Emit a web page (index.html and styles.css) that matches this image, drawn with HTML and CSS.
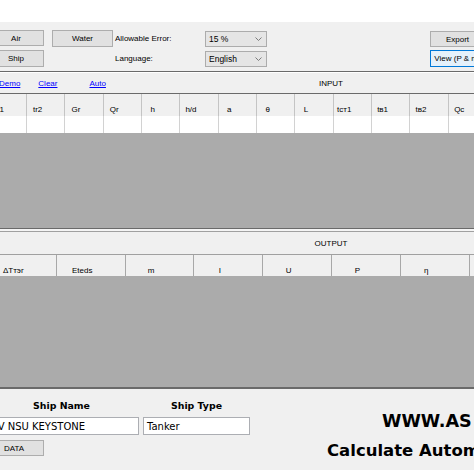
FILE: index.html
```html
<!DOCTYPE html>
<html>
<head>
<meta charset="utf-8">
<link rel="stylesheet" href="styles.css">
</head>
<body>
<div class="top"></div>
<div class="app">
  <div class="toolbar">
    <button class="btn b-air">Air</button>
    <button class="btn b-water">Water</button>
    <span class="lbl l-err">Allowable Error:</span>
    <div class="combo c-err"><span>15 %</span><svg class="chev" width="7" height="4" viewBox="0 0 7 4"><path d="M0.5 0.5 L3.5 3.5 L6.5 0.5" fill="none" stroke="#707070" stroke-width="0.9"/></svg></div>
    <button class="btn b-export">Export</button>
    <button class="btn b-ship">Ship</button>
    <span class="lbl l-lang">Language:</span>
    <div class="combo c-lang"><span>English</span><svg class="chev" width="7" height="4" viewBox="0 0 7 4"><path d="M0.5 0.5 L3.5 3.5 L6.5 0.5" fill="none" stroke="#707070" stroke-width="0.9"/></svg></div>
    <button class="btn b-view">View (P &amp; m)</button>
  </div>

  <div class="rule-dark"></div>
  <div class="rule-white"></div>
  <div class="strip strip-in">
    <div class="links">
      <a class="lnk l-demo">Demo</a>
      <a class="lnk l-clear">Clear</a>
      <a class="lnk l-auto">Auto</a>
    </div>
    <div class="title">INPUT</div>
  </div>
  <div class="rule-dark"></div>

  <div class="grid-in">
    <div class="hc">tr1</div><div class="hc">tr2</div><div class="hc">Gr</div><div class="hc">Qr</div><div class="hc">h</div><div class="hc">h/d</div><div class="hc">a</div><div class="hc">θ</div><div class="hc">L</div><div class="hc">tст1</div><div class="hc">tв1</div><div class="hc">tв2</div><div class="hc">Qc</div>
    <div class="dc"></div><div class="dc"></div><div class="dc"></div><div class="dc"></div><div class="dc"></div><div class="dc"></div><div class="dc"></div><div class="dc"></div><div class="dc"></div><div class="dc"></div><div class="dc"></div><div class="dc"></div><div class="dc"></div>
  </div>
  <div class="ws ws-in"></div>

  <div class="rule-dark"></div>
  <div class="rule-light"></div>
  <div class="rule-mid"></div>
  <div class="strip strip-out">
    <div class="links"></div>
    <div class="title">OUTPUT</div>
  </div>
  <div class="rule-mid"></div>

  <div class="grid-out">
    <div class="oc">ΔTтэг</div><div class="oc">Eteds</div><div class="oc">m</div><div class="oc">I</div><div class="oc">U</div><div class="oc">P</div><div class="oc">η</div><div class="oc"></div>
  </div>
  <div class="ws ws-out"></div>
  <div class="rule-dark2"></div>

  <div class="bottom">
    <div class="form">
      <div class="flbl f-name">Ship Name</div>
      <div class="flbl f-type">Ship Type</div>
      <div class="tbox t-name">MV NSU KEYSTONE</div>
      <div class="tbox t-type">Tanker</div>
      <button class="btn b-data">DATA</button>
    </div>
    <div class="brand">
      <div class="www">WWW.AS</div>
      <div class="calc">Calculate Automatically</div>
    </div>
  </div>
</div>
<div class="foot"></div>
</body>
</html>
```

FILE: styles.css
```css
html, body {
  margin: 0;
  padding: 0;
}
body {
  width: 474px;
  height: 474px;
  overflow: hidden;
  background: #ffffff;
  font-family: "Liberation Sans", Arial, sans-serif;
  font-size: 8px;
  color: #000;
}
.top {
  height: 22px;
  background: #ffffff;
}
.app {
  width: 506px;
  margin-left: -16px;
  background: #f0f0f0;
}

/* toolbar */
.toolbar {
  display: grid;
  grid-template-columns: 60px 8px 61px 2px 90px 62px 163px 55px;
  grid-template-rows: 17px 17px;
  row-gap: 3px;
  padding: 8px 0 4px 0;
  height: 37px;
}
.btn {
  font-family: "Liberation Sans", Arial, sans-serif;
  font-size: 8px;
  color: #000;
  background: #e1e1e1;
  border: 1px solid #adadad;
  padding: 0;
  margin: 0;
  box-sizing: border-box;
  white-space: nowrap;
  overflow: hidden;
}
.b-air { grid-column: 1; grid-row: 1; margin-left: 4px; height: 16px; }
.b-ship { grid-column: 1; grid-row: 2; margin-left: 4px; }
.b-water { grid-column: 3; grid-row: 1; }
.b-export { grid-column: 8; grid-row: 1; height: 16px; align-self: end; }
.b-view {
  grid-column: 8; grid-row: 2;
  background: #e5f1fb;
  border-color: #0078d7;
}
.lbl {
  display: flex;
  align-items: center;
  white-space: nowrap;
}
.l-err { grid-column: 5; grid-row: 1; }
.l-lang { grid-column: 5; grid-row: 2; }
.combo {
  display: flex;
  align-items: center;
  justify-content: space-between;
  box-sizing: border-box;
  height: 16px;
  align-self: end;
  background: #e5e5e5;
  border: 1px solid #acacac;
  padding: 0 3px 0 3px;
  font-size: 8.5px;
}
.c-err { grid-column: 6; grid-row: 1; }
.c-lang { grid-column: 6; grid-row: 2; }
.chev { margin-right: 1px; }

/* rules */
.rule-dark { height: 1px; background: #6a6a6a; }
.rule-dark2 { height: 2px; background: #6a6a6a; }
.rule-white { height: 1px; background: #ffffff; }
.rule-light { height: 2px; background: #f4f4f4; }
.rule-mid { height: 1px; background: #a0a0a0; }

/* strips */
.strip {
  display: grid;
  grid-template-columns: 204px 286px;
  align-items: center;
}
.strip-in { height: 20px; }
.strip-out { height: 22px; }
.links {
  display: flex;
  align-items: center;
}
.lnk {
  color: #0000ff;
  text-decoration: underline;
  white-space: nowrap;
}
.l-demo { margin-left: 15px; }
.l-clear { margin-left: 18px; }
.l-auto { margin-left: 32px; }
.title {
  text-align: center;
}

/* input grid */
.grid-in {
  display: grid;
  grid-template-columns: repeat(13, 38.33px);
  margin-left: 4.67px;
}
.hc {
  height: 22px;
  box-sizing: border-box;
  background: #f0f0f0;
  border-right: 1px solid #c4c4c4;
  display: flex;
  align-items: center;
  justify-content: center;
  padding: 8px 16px 0 0;
  white-space: nowrap;
}
.dc {
  height: 17px;
  box-sizing: border-box;
  background: #ffffff;
  border-right: 1px solid #d2d2d2;
}
.ws { background: #ababab; }
.ws-in { height: 95px; }
.ws-out { height: 111px; }

/* output grid */
.grid-out {
  display: grid;
  grid-template-columns: repeat(8, 68.8px);
  margin-left: 4px;
}
.oc {
  height: 21px;
  box-sizing: border-box;
  border-right: 1px solid #a8a8a8;
  display: flex;
  align-items: center;
  justify-content: center;
  padding: 9px 17px 0 0;
  white-space: nowrap;
}

/* bottom */
.bottom {
  display: flex;
  height: 81px;
}
.form {
  display: grid;
  grid-template-columns: 155px 107px;
  column-gap: 4px;
  grid-template-rows: 12px 18px 16px;
  row-gap: 5px;
  padding-top: 11px;
  align-content: start;
}
.flbl {
  font-family: "DejaVu Sans", Verdana, sans-serif;
  font-weight: bold;
  font-size: 9.4px;
  text-align: center;
  line-height: 12px;
  white-space: nowrap;
}
.tbox {
  font-family: "DejaVu Sans", Verdana, sans-serif;
  font-size: 10px;
  background: #ffffff;
  border: 1px solid #acaeb3;
  box-sizing: border-box;
  display: flex;
  align-items: center;
  padding-left: 3px;
  white-space: nowrap;
  overflow: hidden;
}
.t-name { padding-left: 4px; }
.b-data {
  grid-column: 1;
  width: 60px;
  font-size: 8px;
}
.brand {
  margin-left: 77px;
  padding-top: 17.6px;
  font-family: "DejaVu Sans", Verdana, sans-serif;
  font-weight: bold;
  line-height: 29px;
  white-space: nowrap;
}
.www {
  font-size: 17.6px;
  margin-left: 55px;
}
.calc {
  font-size: 16.5px;
}
.foot {
  height: 4px;
  background: #ffffff;
}
```
